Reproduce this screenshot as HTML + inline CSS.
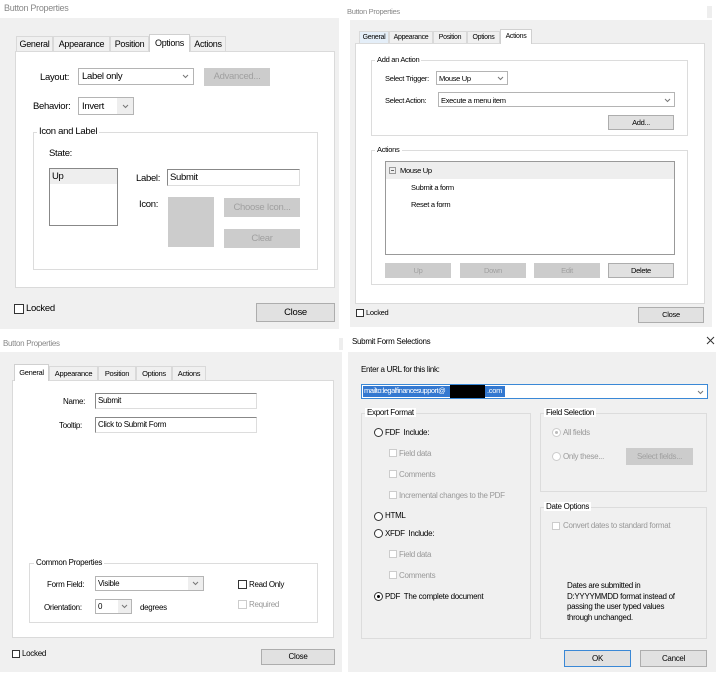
<!DOCTYPE html>
<html><head><style>
*{margin:0;padding:0;box-sizing:border-box}
body{width:716px;height:674px;position:relative;background:#fff;font-family:"Liberation Sans",sans-serif;color:#000;overflow:hidden;letter-spacing:-0.3px}
div,span{position:absolute}
svg{position:absolute}
.t{white-space:nowrap}
.g{background:#f0f0f0}
.w{background:#fff}
.tab{border:1px solid #d9d9d9;border-bottom:none;background:#f0f0f0;text-align:center;white-space:nowrap;overflow:hidden}
.tab.s{background:#fff;border-color:#d0d0d0}
.pn{background:#fff;border:1px solid #dadada}
.fs{border:1px solid #dcdcdc}
.lg{background:inherit;padding:0 2px;white-space:nowrap}
.inp{background:#fff;border:1px solid #a8a8a8}
.sel{background:#fff;border:1px solid #b4b4b4}
.btn{background:#e1e1e1;border:1px solid #adadad;text-align:center;white-space:nowrap}
.dis{background:#cccccc;border:1px solid #cccccc;color:#a0a0a0;text-align:center;white-space:nowrap}
.cb{border:1px solid #333;background:#fff}
.cbd{border:1px solid #ccc;background:#fff}
.dc{color:#999}
.rad{border:1px solid #333;border-radius:50%;background:#fff}
</style></head><body>

<!-- TOP LEFT -->
<div class="t" style="left:4px;top:3px;font-size:9px;color:#888">Button Properties</div>
<div class="g" style="left:0;top:18px;width:339px;height:311px"></div>
<div class="tab" style="left:16px;top:36px;width:37px;height:15px;font-size:9px;line-height:15px">General</div>
<div class="tab" style="left:53px;top:36px;width:57px;height:15px;font-size:9px;line-height:15px">Appearance</div>
<div class="tab" style="left:110px;top:36px;width:39px;height:15px;font-size:9px;line-height:15px">Position</div>
<div class="tab s" style="left:149px;top:34px;width:41px;height:18px;font-size:9px;line-height:16px;z-index:2">Options</div>
<div class="tab" style="left:190px;top:36px;width:36px;height:15px;font-size:9px;line-height:15px">Actions</div>
<div class="pn" style="left:15px;top:51px;width:320px;height:237px"></div>
<div class="t" style="left:40px;top:72px;font-size:9.5px">Layout:</div>
<div class="sel" style="left:78px;top:68px;width:116px;height:17px"></div>
<div class="t" style="left:82px;top:71px;font-size:9.5px">Label only</div>
<svg style="left:182px;top:74px" width="7" height="5"><path d="M1 1L3.5 3.5L6 1" stroke="#777" fill="none"/></svg>
<div class="dis" style="left:204px;top:68px;width:66px;height:18px;font-size:9.5px;line-height:16px">Advanced...</div>
<div class="t" style="left:33px;top:101px;font-size:9.5px">Behavior:</div>
<div class="sel" style="left:78px;top:97px;width:56px;height:18px"></div>
<div style="left:117px;top:98px;width:16px;height:16px;background:#eee"></div>
<div class="t" style="left:82px;top:101px;font-size:9.5px">Invert</div>
<svg style="left:122px;top:104px" width="7" height="5"><path d="M1 1L3.5 3.5L6 1" stroke="#777" fill="none"/></svg>
<div class="fs" style="left:33px;top:132px;width:285px;height:138px"></div>
<div class="lg w" style="left:37px;top:126px;font-size:9.5px">Icon and Label</div>
<div class="t" style="left:49px;top:148px;font-size:9.5px">State:</div>
<div class="inp" style="left:49px;top:168px;width:69px;height:58px;border-color:#888"></div>
<div style="left:50px;top:169px;width:67px;height:15px;background:#eee"></div>
<div class="t" style="left:52px;top:171px;font-size:9.5px">Up</div>
<div class="t" style="left:136px;top:173px;font-size:9.5px">Label:</div>
<div class="inp" style="left:167px;top:169px;width:133px;height:17px;border-color:#888 #ddd #ddd #888"></div>
<div class="t" style="left:170px;top:172px;font-size:9.5px">Submit</div>
<div class="t" style="left:139px;top:199px;font-size:9.5px">Icon:</div>
<div style="left:168px;top:197px;width:46px;height:50px;background:#ccc"></div>
<div class="dis" style="left:224px;top:198px;width:76px;height:19px;font-size:9.5px;line-height:17px">Choose Icon...</div>
<div class="dis" style="left:224px;top:229px;width:76px;height:19px;font-size:9.5px;line-height:17px">Clear</div>
<div class="cb" style="left:14px;top:304px;width:10px;height:10px"></div>
<div class="t" style="left:26px;top:303px;font-size:9.5px">Locked</div>
<div class="btn" style="left:256px;top:303px;width:79px;height:19px;font-size:9.5px;line-height:17px">Close</div>

<!-- TOP RIGHT -->
<div class="t" style="left:347px;top:7px;font-size:7.5px;color:#888">Button Properties</div>
<div style="left:707px;top:6px;width:5px;height:12px;background:#eee"></div>
<div class="g" style="left:350px;top:20px;width:362px;height:307px"></div>
<div class="tab" style="left:359px;top:31px;width:30px;height:12px;font-size:7px;line-height:12px;background:#e4eef8">General</div>
<div class="tab" style="left:389px;top:31px;width:44px;height:12px;font-size:7px;line-height:12px">Appearance</div>
<div class="tab" style="left:433px;top:31px;width:34px;height:12px;font-size:7px;line-height:12px">Position</div>
<div class="tab" style="left:467px;top:31px;width:33px;height:12px;font-size:7px;line-height:12px">Options</div>
<div class="tab s" style="left:500px;top:29px;width:32px;height:15px;font-size:7px;line-height:13px;z-index:2">Actions</div>
<div class="pn" style="left:355px;top:43px;width:350px;height:261px"></div>
<div class="fs" style="left:371px;top:60px;width:317px;height:76px"></div>
<div class="lg w" style="left:375px;top:55px;font-size:7.5px">Add an Action</div>
<div class="t" style="left:385px;top:74px;font-size:7.5px">Select Trigger:</div>
<div class="sel" style="left:436px;top:71px;width:72px;height:14px"></div>
<div class="t" style="left:439px;top:74px;font-size:7.5px">Mouse Up</div>
<svg style="left:497px;top:76px" width="7" height="5"><path d="M1 1L3.5 3.5L6 1" stroke="#777" fill="none"/></svg>
<div class="t" style="left:385px;top:96px;font-size:7.5px">Select Action:</div>
<div class="sel" style="left:438px;top:92px;width:237px;height:15px"></div>
<div class="t" style="left:441px;top:96px;font-size:7.5px">Execute a menu item</div>
<svg style="left:664px;top:98px" width="7" height="5"><path d="M1 1L3.5 3.5L6 1" stroke="#777" fill="none"/></svg>
<div class="btn" style="left:608px;top:115px;width:66px;height:15px;font-size:7.5px;line-height:13px">Add...</div>
<div class="fs" style="left:371px;top:150px;width:317px;height:135px"></div>
<div class="lg w" style="left:375px;top:145px;font-size:7.5px">Actions</div>
<div class="inp" style="left:385px;top:161px;width:290px;height:94px;border-color:#999"></div>
<div style="left:386px;top:162px;width:288px;height:17px;background:#eee"></div>
<div style="left:389px;top:167px;width:7px;height:7px;border:1px solid #999"></div>
<div style="left:391px;top:170px;width:3px;height:1px;background:#666"></div>
<div class="t" style="left:400px;top:166px;font-size:7.5px">Mouse Up</div>
<div class="t" style="left:411px;top:183px;font-size:7.5px">Submit a form</div>
<div class="t" style="left:411px;top:200px;font-size:7.5px">Reset a form</div>
<div class="dis" style="left:385px;top:263px;width:66px;height:15px;font-size:7.5px;line-height:13px">Up</div>
<div class="dis" style="left:460px;top:263px;width:66px;height:15px;font-size:7.5px;line-height:13px">Down</div>
<div class="dis" style="left:534px;top:263px;width:66px;height:15px;font-size:7.5px;line-height:13px">Edit</div>
<div class="btn" style="left:608px;top:263px;width:66px;height:15px;font-size:7.5px;line-height:13px">Delete</div>
<div class="cb" style="left:356px;top:309px;width:8px;height:8px"></div>
<div class="t" style="left:366px;top:308px;font-size:7.5px">Locked</div>
<div class="btn" style="left:638px;top:307px;width:66px;height:16px;font-size:7.5px;line-height:14px">Close</div>

<!-- BOTTOM LEFT -->
<div class="t" style="left:3px;top:339px;font-size:8px;color:#888">Button Properties</div>
<div style="left:339px;top:338px;width:4px;height:12px;background:#eee"></div>
<div class="g" style="left:0;top:352px;width:342px;height:320px"></div>
<div class="tab s" style="left:14px;top:364px;width:35px;height:17px;font-size:7.5px;line-height:15px;z-index:2">General</div>
<div class="tab" style="left:49px;top:366px;width:49px;height:14px;font-size:7.5px;line-height:14px">Appearance</div>
<div class="tab" style="left:98px;top:366px;width:38px;height:14px;font-size:7.5px;line-height:14px">Position</div>
<div class="tab" style="left:136px;top:366px;width:36px;height:14px;font-size:7.5px;line-height:14px">Options</div>
<div class="tab" style="left:172px;top:366px;width:34px;height:14px;font-size:7.5px;line-height:14px">Actions</div>
<div class="pn" style="left:12px;top:380px;width:322px;height:258px"></div>
<div class="t" style="left:63px;top:397px;font-size:8px">Name:</div>
<div class="inp" style="left:95px;top:393px;width:162px;height:16px;border-color:#888 #ddd #ddd #888"></div>
<div class="t" style="left:98px;top:396px;font-size:8px">Submit</div>
<div class="t" style="left:59px;top:421px;font-size:8px">Tooltip:</div>
<div class="inp" style="left:95px;top:417px;width:162px;height:16px;border-color:#888 #ddd #ddd #888"></div>
<div class="t" style="left:98px;top:420px;font-size:8px">Click to Submit Form</div>
<div class="fs" style="left:29px;top:563px;width:289px;height:60px"></div>
<div class="lg w" style="left:34px;top:558px;font-size:8px">Common Properties</div>
<div class="t" style="left:47px;top:580px;font-size:8px">Form Field:</div>
<div class="sel" style="left:95px;top:576px;width:109px;height:15px"></div>
<div style="left:188px;top:577px;width:15px;height:13px;background:#eee"></div>
<div class="t" style="left:98px;top:579px;font-size:8px">Visible</div>
<svg style="left:192px;top:581px" width="7" height="5"><path d="M1 1L3.5 3.5L6 1" stroke="#777" fill="none"/></svg>
<div class="cb" style="left:238px;top:580px;width:9px;height:9px"></div>
<div class="t" style="left:249px;top:580px;font-size:8px">Read Only</div>
<div class="t" style="left:44px;top:603px;font-size:8px">Orientation:</div>
<div class="sel" style="left:95px;top:599px;width:37px;height:15px"></div>
<div style="left:118px;top:600px;width:13px;height:13px;background:#eee"></div>
<div class="t" style="left:98px;top:602px;font-size:8px">0</div>
<svg style="left:121px;top:604px" width="7" height="5"><path d="M1 1L3.5 3.5L6 1" stroke="#777" fill="none"/></svg>
<div class="t" style="left:140px;top:603px;font-size:8px">degrees</div>
<div class="cbd" style="left:238px;top:600px;width:9px;height:9px"></div>
<div class="t dc" style="left:249px;top:600px;font-size:8px">Required</div>
<div class="cb" style="left:12px;top:650px;width:8px;height:8px"></div>
<div class="t" style="left:22px;top:649px;font-size:8px">Locked</div>
<div class="btn" style="left:261px;top:649px;width:74px;height:16px;font-size:8px;line-height:14px">Close</div>

<!-- BOTTOM RIGHT -->
<div class="t" style="left:352px;top:337px;font-size:8px">Submit Form Selections</div>
<svg style="left:706px;top:336px" width="9" height="9"><path d="M1 1L8 8M8 1L1 8" stroke="#333" stroke-width="1"/></svg>
<div class="g" style="left:348px;top:352px;width:368px;height:320px"></div>
<div class="t" style="left:361px;top:365px;font-size:8px">Enter a URL for this link:</div>
<div class="inp" style="left:361px;top:384px;width:347px;height:15px;border-color:#3a88d6"></div>
<div style="left:363px;top:386px;width:142px;height:11px;background:#3378d0"></div>
<div class="t" style="left:364px;top:386px;font-size:7.5px;letter-spacing:-0.5px;color:#fff">mailto:legalfinancesupport@</div>
<div style="left:450px;top:385px;width:35px;height:13px;background:#000"></div>
<div class="t" style="left:487px;top:386px;font-size:7.5px;color:#fff">.com</div>
<svg style="left:697px;top:390px" width="7" height="5"><path d="M1 1L3.5 3.5L6 1" stroke="#777" fill="none"/></svg>
<div class="fs" style="left:361px;top:413px;width:170px;height:226px"></div>
<div class="lg g" style="left:365px;top:408px;font-size:8px">Export Format</div>
<div class="rad" style="left:374px;top:428px;width:9px;height:9px"></div>
<div class="t" style="left:385px;top:428px;font-size:8px">FDF&nbsp; Include:</div>
<div class="cbd" style="left:389px;top:449px;width:8px;height:8px"></div>
<div class="t dc" style="left:399px;top:449px;font-size:8px">Field data</div>
<div class="cbd" style="left:389px;top:470px;width:8px;height:8px"></div>
<div class="t dc" style="left:399px;top:470px;font-size:8px">Comments</div>
<div class="cbd" style="left:389px;top:491px;width:8px;height:8px"></div>
<div class="t dc" style="left:399px;top:491px;font-size:8px">Incremental changes to the PDF</div>
<div class="rad" style="left:374px;top:512px;width:9px;height:9px"></div>
<div class="t" style="left:385px;top:511px;font-size:8px">HTML</div>
<div class="rad" style="left:374px;top:529px;width:9px;height:9px"></div>
<div class="t" style="left:385px;top:529px;font-size:8px">XFDF&nbsp; Include:</div>
<div class="cbd" style="left:389px;top:550px;width:8px;height:8px"></div>
<div class="t dc" style="left:399px;top:550px;font-size:8px">Field data</div>
<div class="cbd" style="left:389px;top:571px;width:8px;height:8px"></div>
<div class="t dc" style="left:399px;top:571px;font-size:8px">Comments</div>
<div class="rad" style="left:374px;top:592px;width:9px;height:9px"></div>
<div style="left:377px;top:595px;width:3px;height:3px;border-radius:50%;background:#000"></div>
<div class="t" style="left:385px;top:592px;font-size:8px">PDF&nbsp; The complete document</div>
<div class="fs" style="left:540px;top:413px;width:167px;height:79px"></div>
<div class="lg g" style="left:544px;top:408px;font-size:8px">Field Selection</div>
<div class="rad" style="left:552px;top:428px;width:9px;height:9px;border-color:#ccc"></div>
<div style="left:555px;top:431px;width:3px;height:3px;border-radius:50%;background:#bbb"></div>
<div class="t dc" style="left:563px;top:428px;font-size:8px">All fields</div>
<div class="rad" style="left:552px;top:452px;width:9px;height:9px;border-color:#ccc"></div>
<div class="t dc" style="left:563px;top:452px;font-size:8px">Only these...</div>
<div class="dis" style="left:626px;top:448px;width:67px;height:17px;font-size:8px;line-height:15px">Select fields...</div>
<div class="fs" style="left:540px;top:507px;width:167px;height:132px"></div>
<div class="lg g" style="left:544px;top:502px;font-size:8px">Date Options</div>
<div class="cbd" style="left:552px;top:522px;width:8px;height:8px"></div>
<div class="t dc" style="left:563px;top:521px;font-size:8px">Convert dates to standard format</div>
<div class="t" style="left:567px;top:581px;font-size:8px;line-height:10.5px">Dates are submitted in<br>D:YYYYMMDD format instead of<br>passing the user typed values<br>through unchanged.</div>
<div class="btn" style="left:564px;top:650px;width:67px;height:17px;font-size:8px;line-height:15px;border-color:#3a88d6">OK</div>
<div class="btn" style="left:640px;top:650px;width:67px;height:17px;font-size:8px;line-height:15px">Cancel</div>
</body></html>
